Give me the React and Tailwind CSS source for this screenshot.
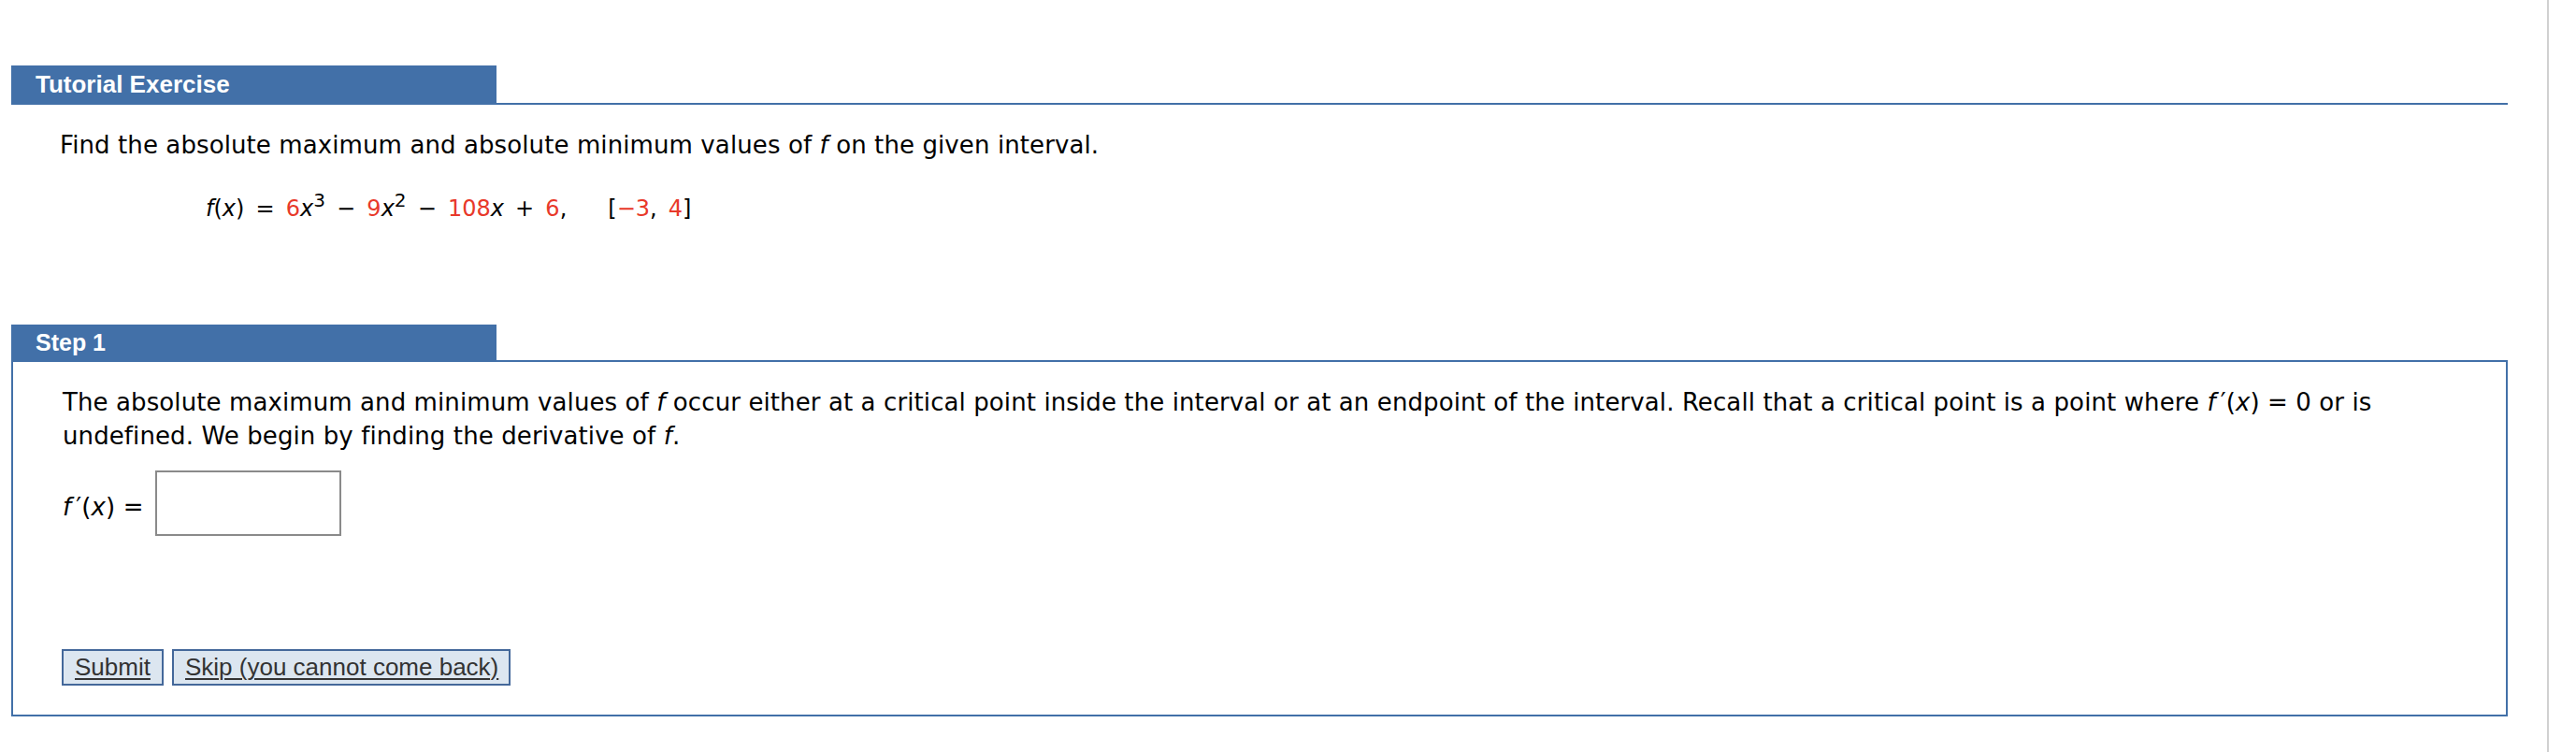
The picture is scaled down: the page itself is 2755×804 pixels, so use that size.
import React from "react";

const BLUE = "border-[#4270a8]";

function Red({ children }) {
  return <span className="text-[#e8392a]">{children}</span>;
}

function Sup({ children }) {
  return (
    <span className="relative -top-[10px] text-[20px] leading-none">{children}</span>
  );
}

function FPrime() {
  return (
    <>
      <i>f</i>
      <span className="ml-[5px]">′</span>(<i>x</i>)
    </>
  );
}

export default function App() {
  return (
    <div className="flex h-[804px] w-[2755px] overflow-hidden bg-white text-black">
      <div className="w-[2724px] pl-[12px] pr-[42px] pt-[70px]">
        {/* Tutorial Exercise header */}
        <div className={`flex border-b-2 ${BLUE}`}>
          <div className="flex h-[40px] w-[519px] items-center bg-[#4270a8] pl-[26px] font-['Liberation_Sans',Arial,sans-serif] text-[26px] font-bold text-white">
            Tutorial Exercise
          </div>
        </div>

        <div className="pl-[52px] pt-[25px] font-['DejaVu_Sans',Verdana,sans-serif] text-[26px] leading-[36px] tracking-[0.1px]">
          <p>
            Find the absolute maximum and absolute minimum values of <i>f</i> on the given interval.
          </p>
          <p className="mt-[32px] whitespace-pre pl-[156px] text-[24px] tracking-normal [word-spacing:4.5px]">
            <i>f</i>(<i>x</i>) = <Red>6</Red><i>x</i>
            <Sup>3</Sup> − <Red>9</Red><i>x</i>
            <Sup>2</Sup> − <Red>108</Red><i>x</i> + <Red>6</Red>,
            <span className="inline-block w-[44px]" />[<Red>−3</Red>, <Red>4</Red>]
          </p>
        </div>

        {/* Step 1 */}
        <div className="mt-[106px]">
          <div className="flex h-[38px] w-[519px] items-center bg-[#4270a8] pl-[26px] pt-[2px] font-['Liberation_Sans',Arial,sans-serif] text-[25px] font-bold text-white">
            Step 1
          </div>
          <div className={`h-[381px] border-2 ${BLUE} pl-[53px] pt-[25px] font-['DejaVu_Sans',Verdana,sans-serif] text-[26px] leading-[36px] tracking-[0.1px]`}>
            <p>
              The absolute maximum and minimum values of <i>f</i> occur either at a critical point inside the
              interval or at an endpoint of the interval. Recall that a critical point is a point where{" "}
              <FPrime /> = 0 or is
              <br />
              undefined. We begin by finding the derivative of <i>f</i>.
            </p>
            <div className="mt-[19px] flex items-center gap-[12px]">
              <span className="mt-[7px]">
                <FPrime /> =
              </span>
              <div className="h-[70px] w-[199px] border-2 border-[#8a8a8a] bg-white" />
            </div>
            <div className="-ml-[1px] mt-[121px] flex gap-[9px] font-['Liberation_Sans',Arial,sans-serif] text-[26px] leading-[35px] tracking-normal text-[#333333]">
              <button className="h-[39px] w-[109px] border-2 border-[#44689a] bg-[#dce6f0] pl-[12px] text-left underline decoration-2 underline-offset-[3px]">
                Submit
              </button>
              <button className="h-[39px] w-[362px] border-2 border-[#44689a] bg-[#dce6f0] pl-[12px] text-left underline decoration-2 underline-offset-[3px]">
                Skip (you cannot come back)
              </button>
            </div>
          </div>
        </div>
      </div>
      <div className="h-full w-[31px] border-l-2 border-[#d0d0d0]" />
    </div>
  );
}
